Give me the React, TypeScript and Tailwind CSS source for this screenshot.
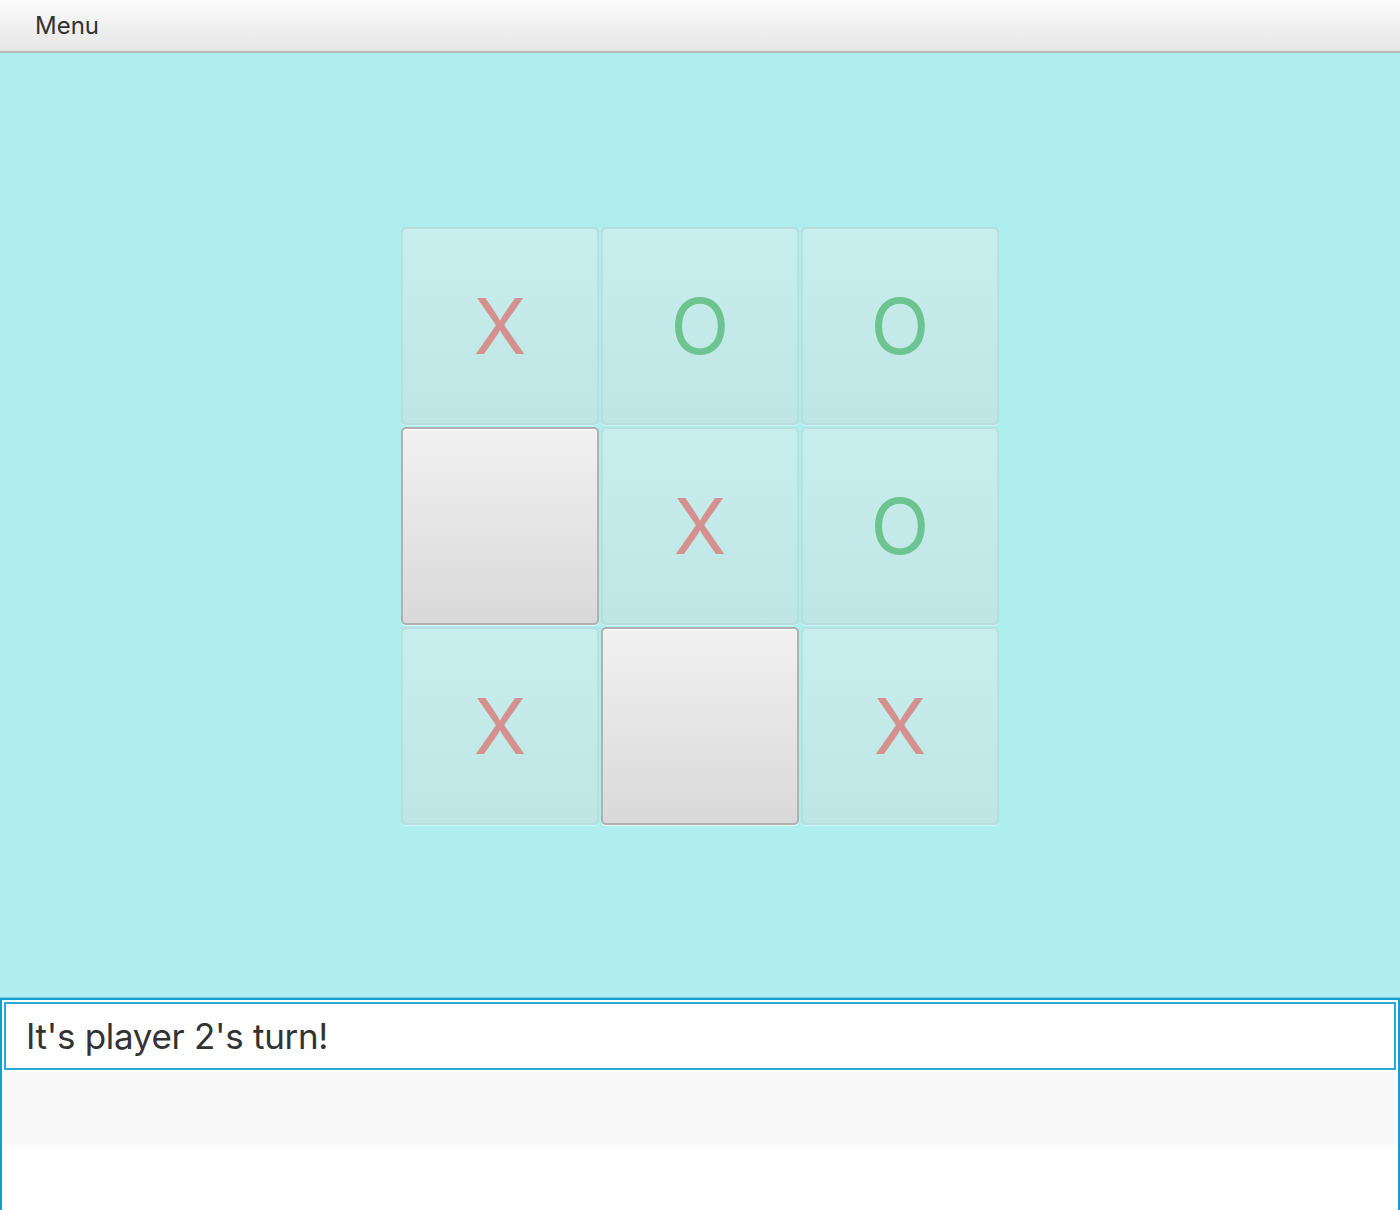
import React from "react";

type Mark = "X" | "O" | null;

const BOARD: Mark[] = ["X", "O", "O", null, "X", "O", "X", null, "X"];

function Cell({ mark }: { mark: Mark }) {
  if (!mark) {
    return (
      <div className="p-px">
        <div className="h-[198px] w-[198px] rounded-[5px] border-2 border-[#b1b1b1] bg-gradient-to-b from-[#f1f1f1] to-[#d9d9d9] shadow-[inset_0_1px_0_#ffffff,0_1px_0_rgba(255,255,255,0.7)]" />
      </div>
    );
  }
  return (
    <div className="p-px">
      <div className="flex h-[198px] w-[198px] items-center justify-center rounded-[5px] border-2 border-[#b8dede] bg-gradient-to-b from-[#c8efee] to-[#bfe5e5] shadow-[0_1px_0_rgba(255,255,255,0.4)]">
        <span
          className={
            mark === "X"
              ? "text-[77px] leading-none text-[#d49190]"
              : "text-[77px] leading-none text-[#6dc490]"
          }
        >
          {mark}
        </span>
      </div>
    </div>
  );
}

export default function App() {
  return (
    <div className="flex h-[1210px] w-[1400px] flex-col overflow-hidden bg-white font-['Inter',sans-serif]">
      {/* Menu bar */}
      <div className="flex h-[53px] shrink-0 items-center border-b-2 border-[#b7b7b7] bg-gradient-to-b from-[#fbfbfb] to-[#e6e6e6] px-[35px]">
        <span className="text-[24px] text-[#333333]">Menu</span>
      </div>

      {/* Board area */}
      <div className="flex h-[944px] shrink-0 items-center justify-center bg-[#afeeee] pt-[2px]">
        <div className="grid grid-cols-3">
          {BOARD.map((m, i) => (
            <Cell key={i} mark={m} />
          ))}
        </div>
      </div>

      {/* Status area */}
      <div className="h-px shrink-0 bg-[#7ccde6]" />
      <div className="flex flex-1 flex-col border-x-2 border-t-2 border-[#149fd3] bg-white">
        <div className="p-[2px]">
          <div className="flex h-[68px] items-center border-2 border-[#2aa8d6] bg-white pl-[20px]">
            <span className="text-[35px] tracking-[-0.3px] text-[#333333]">It's player 2's turn!</span>
          </div>
        </div>
        <div className="h-[73px] bg-[#f9f9f9]" />
      </div>
    </div>
  );
}
